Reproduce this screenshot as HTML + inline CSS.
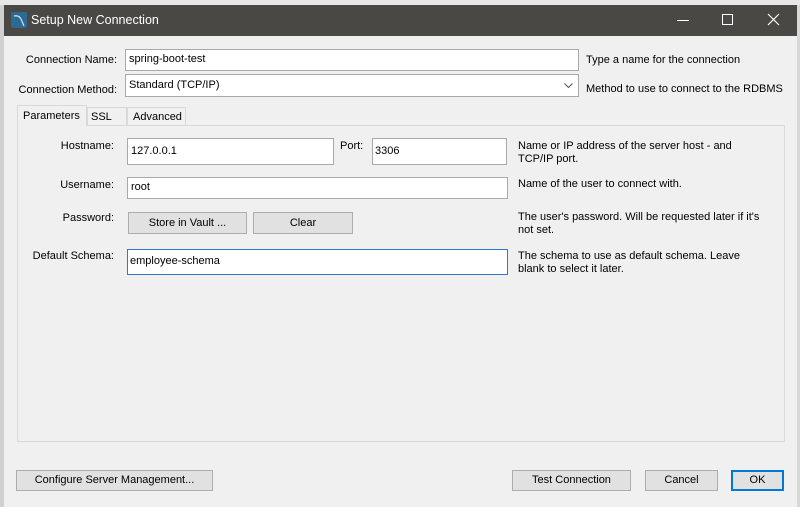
<!DOCTYPE html>
<html><head><meta charset="utf-8"><style>
*{box-sizing:border-box;margin:0;padding:0}
body{width:800px;height:507px;background:#f0f0f0;position:relative;overflow:hidden;font-family:"Liberation Sans",Tahoma,sans-serif;font-size:11px;color:#000}
.a{position:absolute}
.lbl{position:absolute;text-align:right;white-space:nowrap}
.in{position:absolute;background:#fff;border:1px solid #a9a9a9;padding:0 3px;line-height:19px;white-space:nowrap}
.btn{position:absolute;background:#e1e1e1;border:1px solid #adadad;text-align:center;white-space:nowrap}
.t{position:absolute;white-space:nowrap;line-height:13px}
</style></head><body>
<div class="a" style="left:0;top:0;width:800px;height:5px;background:#e8e8e8"></div>
<div class="a" style="left:0;top:5px;width:4px;height:502px;background:#d0d0d0"></div>
<div class="a" style="left:797px;top:5px;width:3px;height:502px;background:#d8d8d8"></div>
<div class="a" style="left:4px;top:5px;width:793px;height:31px;background:#4a4845"></div>
<div class="a" style="left:11px;top:12px;width:16px;height:16px;background:#2c6a96;border-radius:2px"></div>
<svg class="a" style="left:11px;top:12px" width="16" height="16"><path d="M3 4 Q8 3 10 7 L13 14" stroke="#cde" stroke-width="1.3" fill="none"/></svg>
<div class="a" style="left:31px;top:13px;color:#fff;font-size:12.5px">Setup New Connection</div>
<div class="a" style="left:677px;top:20px;width:12px;height:1px;background:#fff"></div>
<div class="a" style="left:722px;top:14px;width:11px;height:11px;border:1px solid #fff"></div>
<svg class="a" style="left:767px;top:13px" width="13" height="13"><path d="M1 1L12 12M12 1L1 12" stroke="#fff" stroke-width="1.2"/></svg>

<div class="lbl" style="right:683px;top:54px">Connection Name:</div>
<div class="in" style="left:125px;top:49px;width:454px;height:22px">spring-boot-test</div>
<div class="t" style="left:586px;top:54px">Type a name for the connection</div>
<div class="lbl" style="right:683px;top:84px">Connection Method:</div>
<div class="in" style="left:125px;top:74px;width:454px;height:23px;line-height:20px">Standard (TCP/IP)</div>
<svg class="a" style="left:564px;top:83px" width="9" height="6"><path d="M0.5 0.5L4.5 4.5L8.5 0.5" stroke="#555" fill="none"/></svg>
<div class="t" style="left:586px;top:83px">Method to use to connect to the RDBMS</div>

<div class="a" style="left:17px;top:125px;width:768px;height:317px;border:1px solid #d9d9d9;background:#f0f0f0"></div>
<div class="a" style="left:17px;top:105px;width:70px;height:21px;border:1px solid #d9d9d9;border-bottom:none;background:#f0f0f0;padding:4px 0 0 5px">Parameters</div>
<div class="a" style="left:87px;top:107px;width:40px;height:18px;border:1px solid #d9d9d9;border-bottom:none;padding:3px 0 0 3px">SSL</div>
<div class="a" style="left:127px;top:107px;width:59px;height:18px;border:1px solid #d9d9d9;border-bottom:none;padding:3px 0 0 5px">Advanced</div>

<div class="lbl" style="right:686px;top:140px">Hostname:</div>
<div class="in" style="left:127px;top:138px;width:207px;height:27px;line-height:25px">127.0.0.1</div>
<div class="lbl" style="left:340px;top:140px">Port:</div>
<div class="in" style="left:372px;top:138px;width:135px;height:27px;line-height:25px;padding-left:2px">3306</div>
<div class="t" style="left:518px;top:140px">Name or IP address of the server host - and<br>TCP/IP port.</div>
<div class="lbl" style="right:686px;top:179px">Username:</div>
<div class="in" style="left:127px;top:177px;width:381px;height:22px">root</div>
<div class="t" style="left:518px;top:178px">Name of the user to connect with.</div>
<div class="lbl" style="right:686px;top:212px">Password:</div>
<div class="btn" style="left:128px;top:212px;width:119px;height:22px;line-height:20px">Store in Vault ...</div>
<div class="btn" style="left:253px;top:212px;width:100px;height:22px;line-height:20px">Clear</div>
<div class="t" style="left:518px;top:211px">The user's password. Will be requested later if it's<br>not set.</div>
<div class="lbl" style="right:686px;top:250px">Default Schema:</div>
<div class="in" style="left:127px;top:249px;width:381px;height:26px;line-height:22px;border-color:#2a7ad2;padding-left:2px">employee-schema</div>
<div class="t" style="left:518px;top:250px">The schema to use as default schema. Leave<br>blank to select it later.</div>

<div class="btn" style="left:16px;top:470px;width:197px;height:21px;line-height:19px">Configure Server Management...</div>
<div class="btn" style="left:512px;top:470px;width:119px;height:21px;line-height:19px">Test Connection</div>
<div class="btn" style="left:645px;top:470px;width:73px;height:21px;line-height:19px">Cancel</div>
<div class="btn" style="left:731px;top:470px;width:53px;height:21px;line-height:17px;border:2px solid #0078d7">OK</div>
</body></html>
